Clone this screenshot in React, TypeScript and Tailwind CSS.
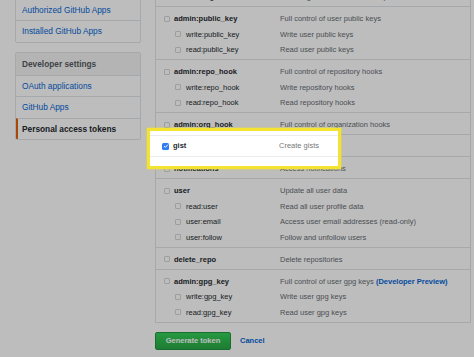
import { Fragment } from "react";

type Scope = { name: string; desc: string; preview?: boolean; subs?: [string, string][] };

const scopes: Scope[] = [
  {
    name: "admin:org",
    desc: "Full control of orgs and teams",
    subs: [
      ["write:org", "Read and write org and team membership"],
      ["read:org", "Read org and team membership"],
    ],
  },
  {
    name: "admin:public_key",
    desc: "Full control of user public keys",
    subs: [
      ["write:public_key", "Write user public keys"],
      ["read:public_key", "Read user public keys"],
    ],
  },
  {
    name: "admin:repo_hook",
    desc: "Full control of repository hooks",
    subs: [
      ["write:repo_hook", "Write repository hooks"],
      ["read:repo_hook", "Read repository hooks"],
    ],
  },
  { name: "admin:org_hook", desc: "Full control of organization hooks" },
  { name: "gist", desc: "Create gists" },
  { name: "notifications", desc: "Access notifications" },
  {
    name: "user",
    desc: "Update all user data",
    subs: [
      ["read:user", "Read all user profile data"],
      ["user:email", "Access user email addresses (read-only)"],
      ["user:follow", "Follow and unfollow users"],
    ],
  },
  { name: "delete_repo", desc: "Delete repositories" },
  {
    name: "admin:gpg_key",
    desc: "Full control of user gpg keys",
    preview: true,
    subs: [
      ["write:gpg_key", "Write user gpg keys"],
      ["read:gpg_key", "Read user gpg keys"],
    ],
  },
];

function Box({ checked }: { checked?: boolean }) {
  if (checked) {
    return (
      <span className="flex h-[7px] w-[7px] shrink-0 items-center justify-center rounded-[1.5px] bg-[#2f7cf6]">
        <svg viewBox="0 0 8 8" className="h-[6px] w-[6px]">
          <path d="M1.5 4.2 3.2 5.8 6.5 2.2" fill="none" stroke="#fff" strokeWidth="1.3" />
        </svg>
      </span>
    );
  }
  return <span className="h-[6px] w-[6px] shrink-0 rounded-[1px] border border-[#d5d5d5] bg-white" />;
}

function SideItem({ label, active, heading }: { label: string; active?: boolean; heading?: boolean }) {
  return (
    <div
      className={
        "flex h-[21.5px] items-center border-t border-[#e1e4e8] first:border-t-0 " +
        (heading
          ? "bg-[#f3f3f3] pl-[6px] font-bold text-[#555b62]"
          : active
            ? "border-l-2 border-l-[#e36209] pl-[4px] font-bold text-[#24292e]"
            : "pl-[6px] text-[#0366d6]")
      }
    >
      {label}
    </div>
  );
}

export default function App() {
  return (
    <div className="relative h-[357px] w-[474px] overflow-hidden bg-white font-['Liberation_Sans',Arial,sans-serif]">
      <div className="flex items-start">
        {/* sidebar */}
        <div className="ml-[15px] mt-[-24px] flex w-[126px] flex-col gap-[9.5px] text-[8.3px]">
          <div className="rounded-[2px] border border-[#e1e4e8] bg-white">
            <SideItem label="Authorized OAuth Apps" />
            <SideItem label="Authorized GitHub Apps" />
            <SideItem label="Installed GitHub Apps" />
          </div>
          <div className="overflow-hidden rounded-[2px] border border-[#e1e4e8] bg-white">
            <SideItem label="Developer settings" heading />
            <SideItem label="OAuth applications" />
            <SideItem label="GitHub Apps" />
            <SideItem label="Personal access tokens" active />
          </div>
        </div>

        {/* scopes table */}
        <div className="ml-[14px] mt-[-47px] flex w-[316px] flex-col">
          <div className="border border-[#e1e4e8] text-[7.5px]">
            {scopes.map((s) => (
              <div key={s.name} className="border-t border-[#e1e4e8] pb-[1.5px] pt-[4px] first:border-t-0">
                <div className="flex h-[15.5px] items-center">
                  <div className="flex w-[124px] items-center gap-[4px] pl-[8px] font-bold text-[#24292e]">
                    <Box />
                    {s.name}
                  </div>
                  <div className="text-[#666c72]">
                    {s.desc}
                    {s.preview && <span className="font-bold text-[#0366d6]"> (Developer Preview)</span>}
                  </div>
                </div>
                {s.subs?.map(([n, d]) => (
                  <Fragment key={n}>
                    <div className="flex h-[15.5px] items-center">
                      <div className="flex w-[124px] items-center gap-[5px] pl-[19px] text-[#24292e]">
                        <Box />
                        {n}
                      </div>
                      <div className="text-[#666c72]">{d}</div>
                    </div>
                  </Fragment>
                ))}
              </div>
            ))}
          </div>
          <div className="mt-[9.5px] flex items-center gap-[9px]">
            <button className="h-[18px] w-[76px] rounded-[2px] border border-[#22943d] bg-gradient-to-b from-[#34d058] to-[#28a745] text-[7.5px] font-bold text-white">
              Generate token
            </button>
            <span className="text-[7.5px] font-bold text-[#0366d6]">Cancel</span>
          </div>
        </div>
      </div>

      {/* dim overlay */}
      <div className="absolute inset-0 z-10 bg-black/[0.26]" />

      {/* highlighted scope */}
      <div className="absolute left-[147px] top-[128px] z-20 h-[41px] w-[194px] border-[3px] border-[#f4e431] bg-white pt-[4px] shadow-[0_0_2px_rgba(244,228,49,0.8)]">
        <div className="flex h-[22px] items-center border-y border-[#eaecef] pl-[12px] text-[7.5px]">
          <div className="flex w-[117px] items-center gap-[4px] font-bold text-[#24292e]">
            <Box checked />
            gist
          </div>
          <div className="text-[#777]">Create gists</div>
        </div>
      </div>
    </div>
  );
}
